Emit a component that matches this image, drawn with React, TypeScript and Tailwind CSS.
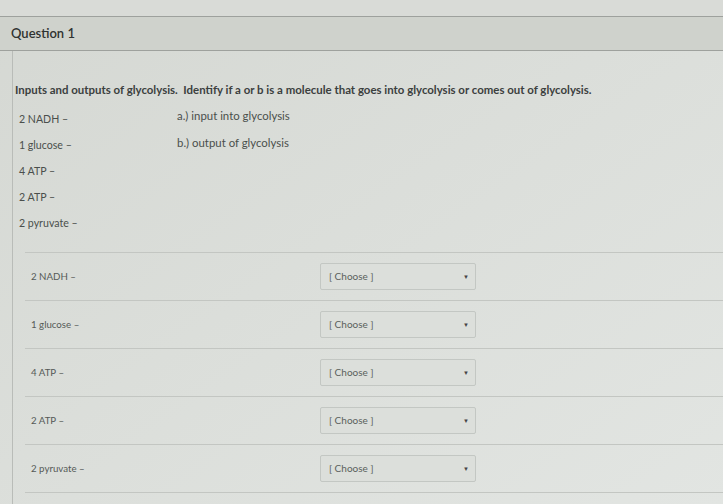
import React from "react";

const items = ["2 NADH –", "1 glucose –", "4 ATP –", "2 ATP –", "2 pyruvate –"];

function Select() {
  return (
    <div className="w-[156px] h-[27px] border border-[#c3c7c3] bg-[#dcdfdb] flex items-center justify-between pl-[8px] pr-[6px] rounded-[2px]">
      <span className="text-[10px] text-[#5a5f5c]">[ Choose ]</span>
      <span className="text-[6px] text-[#444]">▼</span>
    </div>
  );
}

export default function App() {
  return (
    <div
      className="w-[723px] h-[504px] overflow-hidden bg-gradient-to-br from-[#d5d8d3] to-[#e2e5e2] text-[#3f4442]"
      style={{ fontFamily: "Lato, 'Open Sans', sans-serif" }}
    >
      <div className="h-[16px] bg-[#d9dbd7]" />
      <div className="h-[35px] bg-[#cfd2cc] border-y border-[#9ea19d] flex items-center pl-[11px]">
        <span className="text-[13px] font-semibold text-[#2f3331]">Question 1</span>
      </div>
      <div className="ml-[12px] border-l border-[#b9bcb8] h-[460px]">
        <div className="pt-[30px] pl-[2px] text-[11.45px] font-bold text-[#3b403e]">
          Inputs and outputs of glycolysis.&nbsp; Identify if a or b is a molecule that goes into glycolysis or comes out of glycolysis.
        </div>
        <div className="flex mt-[14px] text-[10.6px] text-[#4a4f4c]">
          <div className="w-[164px] pl-[6px] flex flex-col gap-[12px]">
            {items.map((t) => (
              <div key={t} className="h-[14px] leading-[14px]">{t}</div>
            ))}
          </div>
          <div className="flex flex-col gap-[13px] -mt-[3px] text-[11.4px]">
            <div className="h-[14px] leading-[14px]">a.) input into glycolysis</div>
            <div className="h-[14px] leading-[14px]">b.) output of glycolysis</div>
          </div>
        </div>
        <div className="mt-[22px] ml-[12px] border-t border-[#c3c6c2]">
          {items.map((t) => (
            <div key={t} className="h-[48px] border-b border-[#c3c6c2] flex items-center">
              <div className="w-[295px] pl-[6px] text-[9.7px] text-[#555a57]">{t}</div>
              <Select />
            </div>
          ))}
        </div>
      </div>
    </div>
  );
}
